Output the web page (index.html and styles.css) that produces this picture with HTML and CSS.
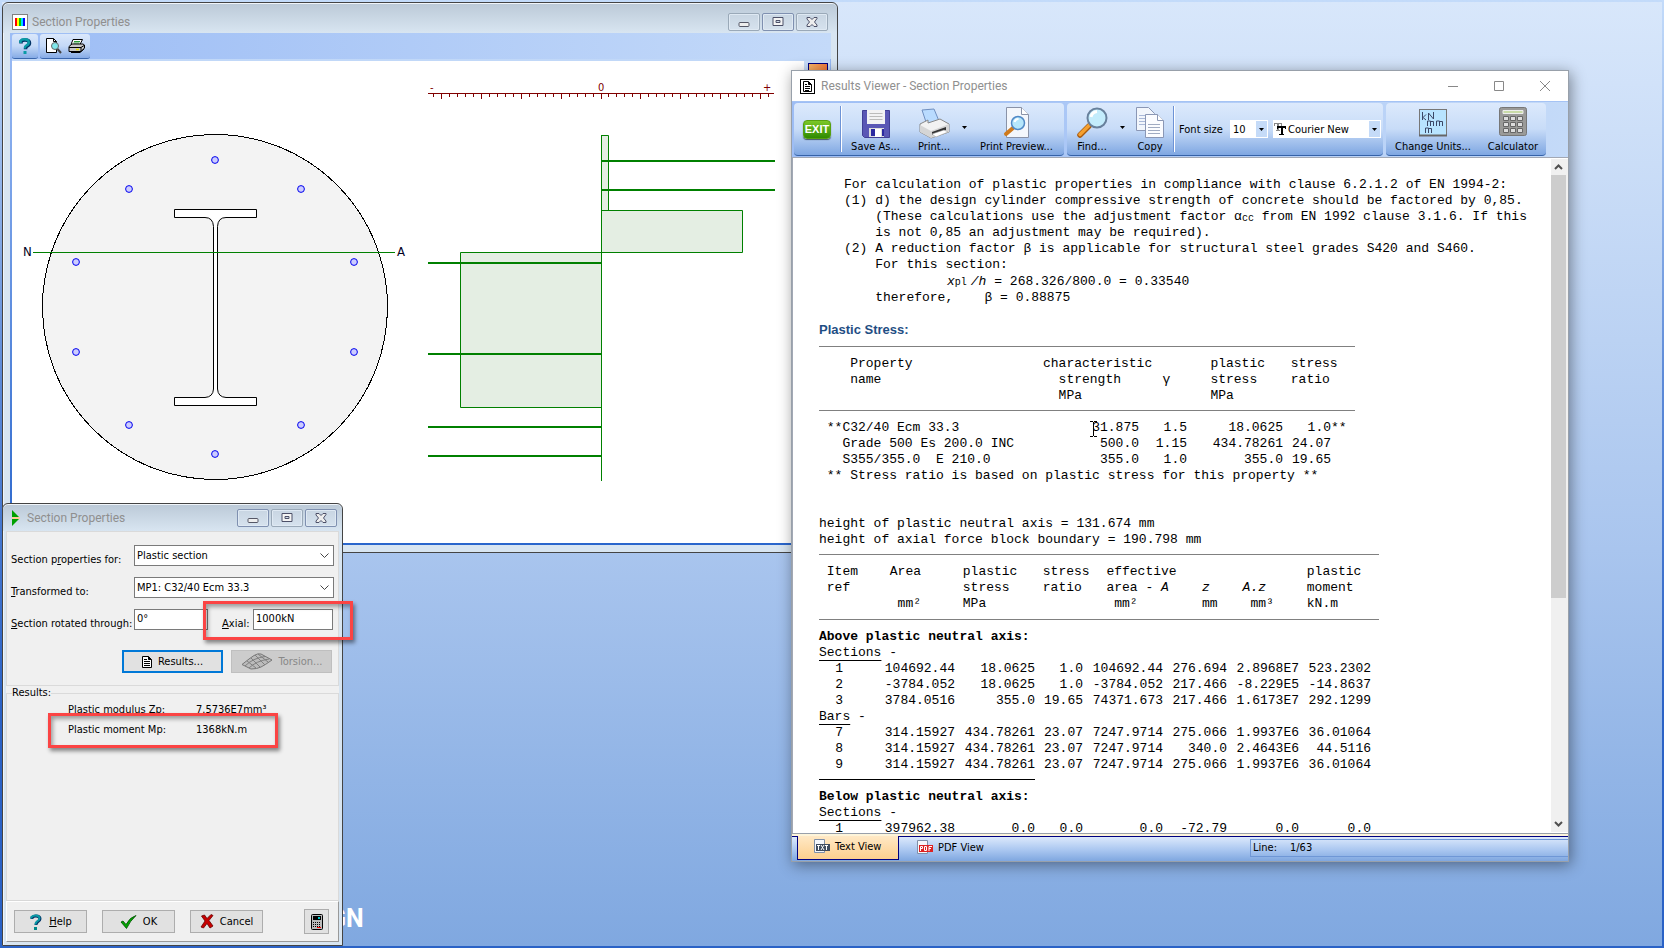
FILE: index.html
```html
<!DOCTYPE html>
<html lang="en">
<head>
<meta charset="utf-8">
<title>Section Properties</title>
<link rel="stylesheet" href="styles.css">
</head>
<body>
<div class="desktop">
  <div class="brand">GN</div>

  <section class="window main-window" aria-label="Section Properties drawing">
    <header class="titlebar">
      <svg class="title-icon" width="16" height="16" viewBox="0 0 16 16"><rect x=".5" y=".5" width="15" height="15" fill="#fff" stroke="#808080"/><path fill="#f00" d="M3 4h2v8H3z"/><path fill="#ff0" d="M5 4h2v8H5z"/><path fill="#0c0" d="M7 4h2v8H7z"/><path fill="#0df" d="M9 4h2v8H9z"/><path fill="#00f" d="M11 4h2v8h-2z"/></svg>
      <h1 class="title">Section Properties</h1>
      <div class="caption-buttons">
        <button class="cap" aria-label="Minimize"><svg width="12" height="12" viewBox="0 0 12 12"><rect x="1" y="6.500" width="10" height="4" rx="1" fill="#eee" stroke="#555766"/></svg></button>
        <button class="cap cap-on" aria-label="Restore"><svg width="12" height="12" viewBox="0 0 12 12"><path fill="#f4f4f4" fill-rule="evenodd" stroke="#4d5068" d="M1 1.500h10v8H1zM4 4.500v2h4v-2z"/></svg></button>
        <button class="cap" aria-label="Close"><svg width="12" height="12" viewBox="0 0 12 12"><path fill="#eee" stroke="#4d5068" d="M1 1.500h3l2 2 2-2h3v1L8.500 6l2.500 3v1.500H8l-2-2-2 2H1V9l2.500-3L1 3z"/></svg></button>
      </div>
    </header>
    <div class="main-client">
      <div class="main-toolbar">
        <div class="tool-group">
          <button class="tool" aria-label="Help"><svg width="16" height="18" viewBox="0 0 16 18"><path fill="none" stroke="#036" stroke-width="3.500" d="M4 6.500V4.500Q5 3 8 3q4.500 0 4.500 3 0 2-2.500 3.200-1.500.8-1.500 3"/><path fill="none" stroke="#0a9ba6" stroke-width="2.500" d="M3.500 6V4Q4.500 2.300 7.500 2.300q4.300 0 4.300 3.200 0 2-2.500 3-1.500.8-1.500 3"/><path fill="#0a9ba6" d="M6.500 14h3v3h-3z"/></svg></button>
        </div>
        <div class="tool-group">
          <button class="tool" aria-label="Preview"><svg width="17" height="16" viewBox="0 0 17 16"><path fill="#fff" stroke="#000" d="M1.500.5h7l3 3v11h-10z"/><path fill="none" stroke="#000" d="M8.500.5v3h3"/><circle cx="10" cy="8" r="3.500" fill="#7fe6ea" stroke="#666"/><path stroke="#444" stroke-width="2" d="M12.500 11l3.500 4"/></svg></button>
          <button class="tool" aria-label="Print"><svg width="17" height="16" viewBox="0 0 17 16"><path fill="#fff" stroke="#000" d="M5 1.500h9.500L12 6.500H3z"/><path stroke="#2a9a3a" d="M6 3.500h6M5.500 5h6"/><path fill="#c8c8c8" stroke="#000" d="M1 8.500l3-2.500h11l1.500 1v3L13 13.500H1z"/><path fill="none" stroke="#000" d="M1 9.500h12l3-2M13 9.500v4M3 14.500h9l4-3.500"/><path stroke="#e8e000" stroke-width="1.500" d="M8 11.500h3"/></svg></button>
        </div>
      </div>
      <div class="main-body">
        <div class="canvas">
          <svg class="drawing" width="792" height="482" viewBox="12 61 792 482" role="img" aria-label="Composite circular section with plastic stress diagram">
            <circle cx="215" cy="307" r="172.500" fill="#f3f3f3" stroke="#000" shape-rendering="crispEdges"/>
            <g fill="#fff" stroke="#000">
              <path d="M174.500 209.500h82v8H226q-8 0-8.500 9V389q.5 8 8.500 8.500h30.500v8h-82v-8H205q8-.5 8.500-8.500V226.500q-.5-9-8.500-9h-30.500z"/>
            </g>
            <g fill="#ccf" stroke="#00e">
              <circle cx="215" cy="160" r="3.400"/><circle cx="129" cy="189" r="3.400"/><circle cx="301" cy="189" r="3.400"/><circle cx="76" cy="262" r="3.400"/><circle cx="354" cy="262" r="3.400"/><circle cx="76" cy="352" r="3.400"/><circle cx="354" cy="352" r="3.400"/><circle cx="129" cy="425" r="3.400"/><circle cx="301" cy="425" r="3.400"/><circle cx="215" cy="454" r="3.400"/>
            </g>
            <path stroke="#008000" d="M33 252.500h362"/>
            <text class="na" x="23" y="256">N</text><text class="na" x="397" y="256">A</text>
            <g stroke="maroon" fill="none">
              <path d="M428 93.500h346"/>
              <path d="M441.500 93v6M481.500 93v6M521.500 93v6M561.500 93v6M601.500 93v6M640.500 93v6M680.500 93v6M720.500 93v6M760.500 93v6"/>
              <path d="M433.500 93v4M449.500 93v4M457.500 93v4M465.500 93v4M473.500 93v4M489.500 93v4M497.500 93v4M505.500 93v4M513.500 93v4M529.500 93v4M537.500 93v4M545.500 93v4M553.500 93v4M569.500 93v4M577.500 93v4M585.500 93v4M593.500 93v4M608.500 93v4M616.500 93v4M624.500 93v4M632.500 93v4M648.500 93v4M656.500 93v4M664.500 93v4M672.500 93v4M688.500 93v4M696.500 93v4M704.500 93v4M712.500 93v4M728.500 93v4M736.500 93v4M744.500 93v4M752.500 93v4M768.500 93v4"/>
            </g>
            <g class="axis"><text x="430" y="91">-</text><text x="598" y="91">0</text><text x="763" y="91">+</text></g>
            <g fill="#e4eee3" stroke="#008000">
              <path d="M601.500 135.500h7v75h-7zM601.500 210.500h141v42h-141zM460.500 252.500h141v155h-141zM601.500 135v346"/>
              <path stroke-width="2" d="M601 161h174M601 190h174M428 263h173M428 354h173M428 427h173M428 456h173"/>
            </g>
          </svg>
        </div>
        <div class="side-strip"><div class="swatch"></div></div>
      </div>
    </div>
  </section>

  <section class="window dialog" aria-label="Section Properties">
    <header class="titlebar">
      <svg class="title-icon" width="16" height="16" viewBox="0 0 16 16"><path fill="#00a000" d="M4 0l8 8-8 8z"/><path fill="#fc9" d="M4 7h8v2H4z"/></svg>
      <h2 class="title">Section Properties</h2>
      <div class="caption-buttons">
        <button class="cap cap-on" aria-label="Minimize"><svg width="12" height="12" viewBox="0 0 12 12"><rect x="1" y="6.500" width="10" height="4" rx="1" fill="#eee" stroke="#555766"/></svg></button>
        <button class="cap" aria-label="Maximize"><svg width="12" height="12" viewBox="0 0 12 12"><path fill="#f4f4f4" fill-rule="evenodd" stroke="#4d5068" d="M1 1.500h10v8H1zM4 4.500v2h4v-2z"/></svg></button>
        <button class="cap cap-on" aria-label="Close"><svg width="12" height="12" viewBox="0 0 12 12"><path fill="#eee" stroke="#4d5068" d="M1 1.500h3l2 2 2-2h3v1L8.500 6l2.500 3v1.500H8l-2-2-2 2H1V9l2.500-3L1 3z"/></svg></button>
      </div>
    </header>
    <form class="dialog-client">
      <div class="form-panel">
        <div class="field">
          <label for="propfor">Section p<u>r</u>operties for:</label>
          <span class="combo"><select id="propfor"><option>Plastic section</option></select><svg width="9" height="6" viewBox="0 0 9 6"><path fill="none" stroke="#444" d="M.5.500l4 4 4-4"/></svg></span>
        </div>
        <div class="field">
          <label for="transformed"><u>T</u>ransformed to:</label>
          <span class="combo"><select id="transformed"><option>MP1: C32/40 Ecm 33.3</option></select><svg width="9" height="6" viewBox="0 0 9 6"><path fill="none" stroke="#444" d="M.5.500l4 4 4-4"/></svg></span>
        </div>
        <div class="field">
          <label for="rotated"><u>S</u>ection rotated through:</label>
          <input class="edit" id="rotated" value="0°">
          <label class="axial-label" for="axial"><u>A</u>xial:</label>
          <input class="edit edit-axial" id="axial" value="1000kN">
        </div>
        <div class="actions">
          <button type="button" class="btn btn-default"><svg width="10" height="12" viewBox="0 0 10 12"><path fill="#fff" stroke="#000" d="M.5.500h6l3 3v8h-9z"/><path stroke="#000" d="M2 3.500h3M2 5.500h6M2 7.500h6M2 9.500h6M6.500.5v3h3"/></svg>Results...</button>
          <button type="button" class="btn btn-off" disabled><svg width="32" height="17" viewBox="0 0 32 17"><path fill="#bbb" stroke="#777" d="M1 11.500Q9 5 13 2.500T20 1l11 6Q24 12 20 14t-10 2z"/><path fill="none" stroke="#808080" d="M4 13q8-8 20-9.500M8 15Q15 8 28 6M6 8l9 7M10 5l9 9M14 2l10 10M17 1l10 8"/></svg>Torsion...</button>
        </div>
      </div>
      <fieldset class="results">
        <legend>Results:</legend>
        <dl>
          <dt>Plastic modulus Zp:</dt><dd>7.5736E7mm³</dd>
          <dt>Plastic moment Mp:</dt><dd>1368kN.m</dd>
        </dl>
      </fieldset>
      <div class="footer">
        <button type="button" class="btn"><svg width="14" height="16" viewBox="0 0 14 16"><path fill="none" stroke="#036" stroke-width="3" d="M3 5V3.500Q4.500 2 7 2q4 0 4 3 0 1.500-2.500 3Q7 9 7 11"/><path fill="none" stroke="#0a9ba6" stroke-width="2" d="M2.500 4.500V3Q4 1.500 6.500 1.500q4 0 4 3 0 1.500-2.500 3Q6.500 8.500 6.500 10.500"/><path fill="#088" d="M5 13h3v3H5z"/></svg><span><u>H</u>elp</span></button>
        <button type="button" class="btn"><svg width="17" height="14" viewBox="0 0 17 14"><path fill="#00a800" stroke="#024d02" stroke-width=".8" d="M1 7l2-1 3 3.500Q10 2 16 .5 10 6 6.500 13.500z"/></svg>OK</button>
        <button type="button" class="btn"><svg width="14" height="15" viewBox="0 0 14 15"><path fill="#c80000" stroke="#600" stroke-width=".8" d="M1.500 2l3-1L7 4.500 11 .5l2 1-4 5 4 5.500-3 2-3-4.500L3.500 14 1 13l4-6z"/></svg>Cancel</button>
        <button type="button" class="btn btn-calc" aria-label="Calculator"><svg width="12" height="16" viewBox="0 0 12 16"><rect x=".5" y=".5" width="11" height="15" rx="1" fill="#bbb" stroke="#000"/><path fill="#000" d="M2 2h8v4H2z"/><path fill="#0cc" d="M7 3h2v2H7z"/><path stroke="#000" stroke-dasharray="1 1" d="M2 8.500h8M2 10.500h8M2 12.500h8"/><path stroke="red" d="M6 13.500h4"/></svg></button>
      </div>
    </form>
  </section>
  <div class="mark mark-axial"></div>
  <div class="mark mark-moment"></div>

  <section class="viewer" aria-label="Results Viewer">
    <header class="viewer-title">
      <svg width="15" height="15" viewBox="0 0 15 15"><rect x=".5" y=".5" width="14" height="14" fill="#fff" stroke="#000"/><path fill="#fff" stroke="#000" d="M3.500 2.500h5l3 3v7h-8z"/><path stroke="#000" d="M5 5.500h2M5 7.500h5M5 9.500h5M5 11.500h4M8.500 2.500v3h3"/></svg>
      <h2 class="title">Results Viewer - Section Properties</h2>
      <button class="win" aria-label="Minimize"><svg width="10" height="10"><path stroke="#888" d="M0 5.500h10"/></svg></button>
      <button class="win" aria-label="Maximize"><svg width="10" height="10"><path fill="none" stroke="#888" d="M.5.500h9v9h-9z"/></svg></button>
      <button class="win" aria-label="Close"><svg width="10" height="10"><path stroke="#888" d="M0 0l10 10M10 0L0 10"/></svg></button>
    </header>
    <div class="ribbon">
      <div class="rgroup">
        <button class="exit">EXIT</button>
        <span class="sep"></span>
        <button class="rbtn rbtn-save"><svg width="28" height="30" viewBox="0 0 28 30"><path fill="#5a57b5" stroke="#413f96" d="M.5 1.500h27v27h-25l-2-2z"/><path fill="#f2f2f4" d="M5 1h18v14H5z"/><path stroke="#bbb" d="M7.500 4.500h13M7.500 7.500h13M7.500 10.500h13"/><path fill="#ddd" d="M7 19h15v9H7z"/><path fill="#2c2aa0" d="M9 20h4v7H9zM20 20h2v7h-2z"/><path fill="#fff" d="M13 20h6v8h-6z"/></svg>Save As...</button>
        <button class="rbtn rbtn-print"><svg width="32" height="32" viewBox="0 0 32 32"><path fill="#b9dbff" stroke="#6f8fc0" d="M4 3l12-1 5 12-12 4z"/><path fill="#f2f2f2" stroke="#888" d="M2 17l8-4v3l12-4 9 5v8L13 31 2 25z"/><path fill="#d5d5d5" d="M2 18l11 6 18-7v8L13 31 2 25z"/><path fill="#333" d="M14 25l14-5v3l-14 5z"/><path fill="#fff" stroke="#999" stroke-width=".5" d="M14 27l12-4 4 2-12 5z"/></svg>Print...</button>
        <span class="drop"><svg width="5" height="3"><path d="M0 0h5L2.500 3z"/></svg></span>
        <button class="rbtn rbtn-preview"><svg width="28" height="32" viewBox="0 0 28 32"><path fill="#f4f7fc" stroke="#8a93a8" d="M3.500.5h15l7 7v23h-22z"/><path fill="#fff" stroke="#8a93a8" d="M18.500.5v7h7"/><path stroke="#cf7a1c" stroke-width="4" stroke-linecap="round" d="M3 27l7-6"/><circle cx="15" cy="16" r="6.500" fill="#b5e6fb" stroke="#5189c6" stroke-width="1.500"/><path fill="none" stroke="#fff" stroke-width="2" d="M11.500 15q1-3 4-3"/></svg>Print Preview...</button>
      </div>
      <div class="rgroup">
        <button class="rbtn rbtn-find"><svg width="32" height="32" viewBox="0 0 32 32"><path stroke="#a85a10" stroke-width="5.500" stroke-linecap="round" d="M4 28l9-9"/><path stroke="#f5a030" stroke-width="3.500" stroke-linecap="round" d="M4 27.500l9-9"/><circle cx="21" cy="11" r="9.500" fill="#c3ecfc" stroke="#68809c" stroke-width="2"/><path fill="none" stroke="#fff" stroke-width="3" d="M15 10q1-5 6-5.500"/></svg>Find...</button>
        <span class="drop"><svg width="5" height="3"><path d="M0 0h5L2.500 3z"/></svg></span>
        <button class="rbtn rbtn-copy"><svg width="29" height="32" viewBox="0 0 29 32"><path fill="#f2f6fc" stroke="#8a97b5" d="M.5.500h12l6 6v17H.5z"/><path stroke="#a9b8d8" d="M3 8.500h8M3 11.500h8M3 14.500h8M3 17.500h8"/><path fill="#fbfcff" stroke="#8a97b5" d="M9.500 7.500h12l6 6v17h-18z"/><path fill="#fff" stroke="#8a97b5" d="M21.500 7.500v6h6"/><path stroke="#a0abc2" d="M12 17.500h12M12 20.500h12M12 23.500h12M12 26.500h12"/></svg>Copy</button>
        <span class="sep"></span>
        <label class="rlabel" for="fsize">Font size</label>
        <span class="rcombo rcombo-size"><select id="fsize"><option>10</option></select><span class="rarrow"><svg width="5" height="3"><path d="M0 0h5L2.500 3z"/></svg></span></span>
        <span class="rcombo rcombo-font"><svg width="12" height="12" viewBox="0 0 12 12"><path fill="#888" d="M0 0h8v3H7V1H5v6h1v1H2V7h1V1H1v2H0z"/><path d="M3 3h9v3h-1V5H9v6h1v1H5v-1h2V5H4v1H3z"/></svg><select aria-label="Font"><option>Courier New</option></select><span class="rarrow"><svg width="5" height="3"><path d="M0 0h5L2.500 3z"/></svg></span></span>
      </div>
      <div class="rgroup">
        <button class="rbtn rbtn-units"><svg width="28" height="28" viewBox="0 0 28 28"><rect x=".5" y=".5" width="27" height="26" fill="#b8e4ff" stroke="#777"/><path stroke="#666" stroke-width="2" d="M0 26.500h28"/><g fill="none" stroke="#3c4866"><path d="M3.500 3v8M7 5.500L4 8.500l3 2.500M9.500 11V4l5 6V3"/><path d="M8.500 17v-5h3v5M11.500 12.500h3V17M17.500 17v-5h3v5M20.500 12.500h3V17M6.500 24v-5h3v5M9.500 19.500h3V24"/></g></svg>Change Units...</button>
        <button class="rbtn rbtn-calc"><svg width="28" height="30" viewBox="0 0 28 30"><rect x=".5" y=".5" width="27" height="28" rx="2" fill="#9a9a98" stroke="#777"/><path fill="#c9dba8" stroke="#eee" d="M4 3.500h20v3H4z"/><g fill="#ddd" stroke="#666"><path d="M4.500 9.500h5v4h-5zM11.500 9.500h5v4h-5zM18.500 9.500h5v4h-5zM4.500 15.500h5v4h-5zM11.500 15.500h5v4h-5zM18.500 15.500h5v4h-5zM4.500 21.500h5v4h-5zM11.500 21.500h5v4h-5zM18.500 21.500h5v4h-5z"/></g></svg>Calculator</button>
      </div>
    </div>
    <div class="report-area">
      <div class="report">
<pre class="notes">For calculation of plastic properties in compliance with clause 6.2.1.2 of EN 1994-2:
(1) d) the design cylinder compressive strength of concrete should be factored by 0,85.
    (These calculations use the adjustment factor α<span class="cc">cc</span> from EN 1992 clause 3.1.6. If this
    is not 0,85 an adjustment may be required).
(2) A reduction factor β is applicable for structural steel grades S420 and S460.
    For this section:</pre>
        <div class="ratio"><i>x</i><span class="pl">pl</span><span><i>/h</i> = 268.326/800.0 = 0.33540</span></div>
<pre class="notes">    therefore,    β = 0.88875</pre>
        <h3 class="report-heading">Plastic Stress:</h3>
        <hr class="rule rule-one">
        <table class="stress">
          <colgroup><col class="w28"><col class="w12"><col class="w6"><col class="w12"><col class="w6"><col class="w3"></colgroup>
          <thead><tr>
<th>    Property
    name</th>
<th>characteristic
  strength
  MPa</th>
<th> 
   γ</th>
<th>   plastic
   stress
   MPa</th>
<th> stress
 ratio</th>
<th></th>
          </tr>
          <tr><th colspan="6"><hr class="rule"></th></tr></thead>
          <tbody>
            <tr><td> **C32/40 Ecm 33.3</td><td>31.875</td><td>1.5</td><td>18.0625</td><td>1.0</td><td>**</td></tr>
            <tr><td>   Grade 500 Es 200.0 INC</td><td>500.0</td><td>1.15</td><td>434.78261</td><td>24.07</td><td></td></tr>
            <tr><td>   S355/355.0  E 210.0</td><td>355.0</td><td>1.0</td><td>355.0</td><td>19.65</td><td></td></tr>
          </tbody>
        </table>
<pre class="heights"> ** Stress ratio is based on plastic stress for this property **


height of plastic neutral axis = 131.674 mm
height of axial force block boundary = 190.798 mm</pre>
        <hr class="rule rule-two">
        <table class="moments">
          <colgroup><col class="w3"><col class="w14"><col class="w10"><col class="w6"><col class="w10"><col class="w8"><col class="w9"><col class="w9"></colgroup>
          <thead><tr>
<th> Item
 ref</th>
<th>      Area

       mm²</th>
<th> plastic
 stress
 MPa</th>
<th> stress
 ratio</th>
<th>   effective
   area - <i>A</i>
    mm²</th>
<th> 
     <i>z</i>
     mm</th>
<th> 
  <i>A.z</i>
   mm³</th>
<th> plastic
 moment
 kN.m</th>
          </tr>
          <tr><th colspan="8"><hr class="rule rule-two rule-head"></th></tr></thead>
          <tbody>
            <tr><th colspan="8"><b>Above plastic neutral axis:</b></th></tr>
            <tr><th colspan="8"><u>Sections</u> -</th></tr>
            <tr><td>1</td><td>104692.44</td><td>18.0625</td><td>1.0</td><td>104692.44</td><td>276.694</td><td>2.8968E7</td><td>523.2302</td></tr>
            <tr><td>2</td><td>-3784.052</td><td>18.0625</td><td>1.0</td><td>-3784.052</td><td>217.466</td><td>-8.229E5</td><td>-14.8637</td></tr>
            <tr><td>3</td><td>3784.0516</td><td>355.0</td><td>19.65</td><td>74371.673</td><td>217.466</td><td>1.6173E7</td><td>292.1299</td></tr>
            <tr><th colspan="8"><u>Bars</u> -</th></tr>
            <tr><td>7</td><td>314.15927</td><td>434.78261</td><td>23.07</td><td>7247.9714</td><td>275.066</td><td>1.9937E6</td><td>36.01064</td></tr>
            <tr><td>8</td><td>314.15927</td><td>434.78261</td><td>23.07</td><td>7247.9714</td><td>340.0</td><td>2.4643E6</td><td>44.5116</td></tr>
            <tr><td>9</td><td>314.15927</td><td>434.78261</td><td>23.07</td><td>7247.9714</td><td>275.066</td><td>1.9937E6</td><td>36.01064</td></tr>
            <tr><th colspan="8"><hr class="rule rule-short"></th></tr>
            <tr><th colspan="8"><b>Below plastic neutral axis:</b></th></tr>
            <tr><th colspan="8"><u>Sections</u> -</th></tr>
            <tr><td>1</td><td>397962.38</td><td>0.0</td><td>0.0</td><td>0.0</td><td>-72.79</td><td>0.0</td><td>0.0</td></tr>
          </tbody>
        </table>
      </div>
      <div class="scrollbar">
        <svg width="15" height="16" viewBox="0 0 15 16"><path fill="none" stroke="#505050" stroke-width="2" d="M4 10l3.500-3.500L11 10"/></svg>
        <div class="track"><div class="thumb"></div></div>
        <svg width="15" height="16" viewBox="0 0 15 16"><path fill="none" stroke="#505050" stroke-width="2" d="M4 6l3.500 3.500L11 6"/></svg>
      </div>
    </div>
    <footer class="viewbar">
      <button class="tab tab-on"><svg width="16" height="15" viewBox="0 0 16 15"><path fill="#f4f6fa" stroke="#7f8fa8" d="M.5.500h10v13H.5z"/><path fill="#3f4c5e" d="M2 5h14v7H2z"/><path fill="none" stroke="#fff" d="M3 6.500h3M4.500 6v5M7 6l3 5M10 6l-3 5M11 6.500h3M12.500 6v5"/></svg>Text View</button>
      <button class="tab"><svg width="16" height="15" viewBox="0 0 16 15"><path fill="#f4f6fa" stroke="#7f8fa8" d="M.5.500h10v13H.5z"/><path fill="#d22" d="M2 5h14v7H2z"/><path fill="none" stroke="#fff" d="M3.500 11V6.500h2v2h-2M7.500 6.500h2v4h-2zM12 11V6.500h3M12 8.500h2"/></svg>PDF View</button>
      <div class="line-status"><span>Line:</span><span>1/63</span></div>
    </footer>
  </section>
  <svg class="ibeam" width="7" height="16" viewBox="0 0 7 16"><path fill="none" stroke="#000" d="M0 .5h3M4 .5h3M3.500 1v14M0 15.500h3M4 15.500h3"/></svg>
</div>
</body>
</html>
```
FILE: styles.css
```css
* { box-sizing: border-box; }
html, body { height: 100%; }
body { margin: 0; font-family: "DejaVu Sans Condensed", "Open Sans", sans-serif; font-size: 11px; color: #000; overflow: hidden; }
button, input, select { font: inherit; color: inherit; margin: 0; }
button { padding: 0; border: 0; background: none; }
svg { flex: none; display: block; }

.desktop {
  position: relative; height: 100%; overflow: hidden;
  border: 2px solid; border-image: linear-gradient(#c3dbfa, #5c8ad8 40%, #2a62c6 75%) 2;
  background: linear-gradient(#d8e7fb, #a9c5ee 58%, #80a8e0);
}
.brand { position: absolute; left: 327px; bottom: 13px; color: #fff; font: bold 25px/28px Roboto, sans-serif; }

/* framed windows */
.window {
  position: absolute; display: flex; flex-direction: column;
  padding: 0 6px 6px; border: 1px solid #444; border-radius: 6px 6px 0 0;
  background: #d8e5f1; box-shadow: inset 1px 1px 0 #f0f5fa;
}
.titlebar { display: flex; align-items: center; margin: 1px -6px 0; padding: 0 9px; border-radius: 5px 5px 0 0; background: linear-gradient(#bccad8, #d8e5f1); }
.title { flex: 1; margin: 0; color: #8f8f8f; font: 12px/16px Roboto, sans-serif; }
.title-icon { margin-right: 4px; }
.caption-buttons { display: flex; gap: 2px; }
.cap { display: flex; align-items: center; justify-content: center; width: 32px; height: 18px; border: 1px solid #9aa9b8; border-radius: 2px; background: linear-gradient(#c8d5e2, #d6e2ee); box-shadow: inset 0 0 0 1px #dfe9f3; }
.cap-on { border-color: #7f90b0; }

.main-window { left: 0; top: 0; width: 836px; height: 551px; padding: 0 6px 7px 7px; }
.main-window .titlebar { height: 29px; margin-left: -7px; padding-top: 7px; }
.main-client { flex: 1; display: flex; flex-direction: column; border: 2px solid; border-top: 0; border-image: linear-gradient(#9dbdf5, #2a66cc) 2; border-right-width: 1px; }
.main-toolbar { display: flex; gap: 2px; height: 26px; margin: 0 -1px 0 0; background: linear-gradient(90deg, #9dbdf5, #c4daf9); }
.tool-group { display: flex; align-items: center; gap: 6px; margin-top: 1px; padding: 0 5px; border-radius: 3px; border-bottom: 1px solid #3a66ac; background: linear-gradient(#dbe8fb, #c4d9f7 50%, #86abe6); }
.main-body { flex: 1; display: flex; border-top: 2px solid #c1d8f8; min-height: 0; }
.canvas { flex: 1; background: #fff; overflow: hidden; }
.side-strip { width: 26px; padding: 2px 2px 0 4px; background: #c9defa; }
.swatch { height: 26px; border: 1px solid #000080; background: linear-gradient(90deg, #fbb568, #f27c3c); }
.drawing text { font-size: 13px; fill: #002; }
.drawing .axis text { font-size: 11px; fill: maroon; }

.dialog { left: 0; top: 501px; bottom: 0; width: 341px; padding: 0 3px 3px; }
.dialog .titlebar { height: 26px; margin: 1px -3px 0; padding: 0 5px 1px 5px; }
.dialog .title-icon { margin-right: 3px; }
.dialog-client { flex: 1; display: flex; flex-direction: column; background: #f0f0f0; }
.form-panel { display: flex; flex-direction: column; gap: 11px; padding: 13px 4px 12px; border: 1px solid #dadada; }
.field { display: flex; align-items: flex-start; height: 21px; }
.field label { width: 123px; padding-top: 8px; line-height: 14px; white-space: nowrap; }
.combo { display: flex; align-items: center; flex: 1; height: 21px; padding-right: 4px; border: 1px solid #7a7a7a; background: #fff; }
.combo select { flex: 1; height: 19px; padding: 0 2px; border: 0; background: none; appearance: none; }
.edit { width: 74px; height: 21px; padding: 0 2px 2px; border: 1px solid #7a7a7a; background: #fff; }
.field .axial-label { width: 45px; padding-left: 14px; }
.edit-axial { width: 80px; }
.actions { display: flex; justify-content: flex-end; gap: 8px; padding: 9px 2px 0 0; }
.btn { display: flex; align-items: center; justify-content: center; gap: 6px; width: 73px; height: 23px; border: 1px solid #adadad; background: #e1e1e1; }
.actions .btn { width: 101px; }
.btn-default { border: 2px solid #0078d7; }
.btn-off { border-color: #bfbfbf; background: #ccc; color: #888; }
.results { flex: 1; margin: 0; padding: 0 0 0 61px; border: 1px solid #dadada; border-bottom: 0; }
.results legend { margin-left: -56px; line-height: 14px; padding: 0; }
.results dl { display: grid; grid-template-columns: 128px auto; margin: 0; line-height: 20px; }
.results dd { margin: 0; }
.footer { display: flex; align-items: center; gap: 15px; height: 41px; padding: 0 9px 0 7px; border: 1px solid #fff; border-right-color: #999; border-bottom-color: #999; box-shadow: 0 -1px 0 #d8d8d8; }
.btn-calc { width: 25px; height: 25px; margin-left: auto; }

.mark { position: absolute; border: 3px solid #fb4444; box-shadow: 2px 3px 4px rgba(0,0,0,.45), inset 2px 3px 4px rgba(0,0,0,.35); pointer-events: none; }
.mark-axial { left: 201px; top: 599px; width: 150px; height: 39px; }
.mark-moment { left: 46px; top: 711px; width: 230px; height: 35px; }

/* results viewer */
.viewer {
  position: absolute; left: 789px; right: 93px; top: 68px; bottom: 84px;
  display: flex; flex-direction: column; border: 1px solid #98a0aa; background: #fff;
  box-shadow: 2px 3px 14px rgba(0,0,0,.42);
}
.viewer-title { display: flex; align-items: center; height: 30px; padding-left: 8px; }
.viewer-title .title { margin-left: 6px; }
.win { display: flex; align-items: center; justify-content: center; width: 46px; height: 28px; }
.ribbon { display: flex; gap: 3px; height: 57px; padding: 1px 0 1px 2px; border-bottom: 1px solid #a2a8b4; border-top: 1px solid #a5c3f4; background: linear-gradient(90deg, #9dbdf5, #c4daf8); }
.rgroup { display: flex; align-items: center; border-radius: 4px; border-bottom: 1px solid #3562a8; background: linear-gradient(#dce9fc, #c8dcf8 50%, #7fa7e2); }
.sep { width: 2px; height: 46px; border-left: 1px solid #6d93d6; border-right: 1px solid #fff; }
.exit { width: 28px; height: 19px; margin: 0 9px; border: 1px solid #57a010; border-radius: 4px; background: linear-gradient(#7cc828, #2f8a00); color: #fff; font: bold 11px/16px "Liberation Sans", sans-serif; box-shadow: 0 1px 1px #456; }
.rbtn { display: flex; flex-direction: column; align-items: center; justify-content: flex-end; height: 53px; padding-bottom: 2px; line-height: 14px; white-space: nowrap; gap: 1px; }
.rbtn-save { width: 67px; }
.rbtn-print { width: 50px; }
.rbtn-preview { width: 95px; }
.rbtn-find { width: 50px; }
.rbtn-copy { width: 46px; }
.rbtn-units { width: 94px; }
.rbtn-calc { width: 66px; }
.rbtn-units, .rbtn-calc { gap: 3px; }
.drop { display: flex; justify-content: center; width: 10px; padding-bottom: 3px; }
.rgroup .sep { flex: none; }
.rlabel { width: 55px; padding-left: 4px; white-space: nowrap; }
.rcombo { display: flex; align-items: center; height: 18px; padding: 1px; background: #fff; }
.rcombo select { flex: 1; min-width: 0; padding: 0 2px; border: 0; background: none; appearance: none; }
.rcombo-size { width: 38px; margin-right: 5px; }
.rcombo-font { width: 108px; margin-right: 2px; }
.rarrow { display: flex; align-items: center; justify-content: center; width: 11px; height: 16px; background: #c5dbf8; }

.report-area { flex: 1; display: flex; min-height: 0; border-left: 1px solid #a2a8b4; }
.report { flex: 1; min-width: 0; padding: 19px 0 0 26px; overflow: hidden; font: 13px/16px "Liberation Mono", monospace; }
.report pre { margin: 0; font: inherit; }
.report .notes { padding-left: 25px; }
.cc { font-size: 10px; line-height: 12px; vertical-align: -1px; }
.ratio { display: flex; padding-left: 128px; line-height: 17px; white-space: pre; }
.pl { width: 16px; padding-top: 2px; font-size: 10px; line-height: 15px; }
.report-heading { margin: 15px 0 0; color: #1f4e84; font: bold 13px/17px "Liberation Sans", sans-serif; }
.rule { margin: 6px 0 9px; border: 0; border-top: 1px solid #808080; }
.rule-one { width: 536px; margin-top: 8px; }
.rule-two { width: 560px; }
.rule-head { margin-top: 7px; }
.rule-short { width: 216px; border-color: #000; }
.report table { table-layout: fixed; border-collapse: collapse; white-space: pre; }
.report th, .report td { padding: 0; vertical-align: top; text-align: right; font-weight: normal; }
.report th, .stress td:first-child, .stress td:last-child { text-align: left; }
.stress { width: 536px; }
.moments { width: 552px; }
.report u { text-underline-offset: 4px; }
.w3 { width: 24px; } .w6 { width: 48px; } .w8 { width: 64px; } .w9 { width: 72px; }
.w10 { width: 80px; } .w12 { width: 96px; } .w14 { width: 112px; } .w28 { width: 224px; }

.scrollbar { display: flex; flex-direction: column; width: 17px; margin: 1px 0 1px; padding-right: 2px; background: #f0f0f0; }
.track { flex: 1; }
.thumb { height: 66%; background: #cdcdcd; }
.viewbar { display: flex; align-items: center; height: 28px; padding-left: 5px; border-top: 1px solid #98a0aa; background: linear-gradient(#fdf4da 2px, #000080 2px, #000080 3px, #dce9fc 3px, #a9c6f0 60%, #7fa7e0); }
.tab { display: flex; align-items: center; gap: 5px; width: 102px; height: 24px; padding: 0 0 2px 18px; margin-top: 1px; }
.tab-on { padding-left: 16px; border: 1px solid #000080; border-top: 0; background: linear-gradient(#ffe9c6, #fccf8e); }
.line-status { display: flex; gap: 13px; margin-left: auto; width: 318px; height: 18px; padding-left: 2px; line-height: 16px; border: 1px solid #6f97d6; border-right: 0; }
.ibeam { position: absolute; left: 1088px; top: 419px; }
```
